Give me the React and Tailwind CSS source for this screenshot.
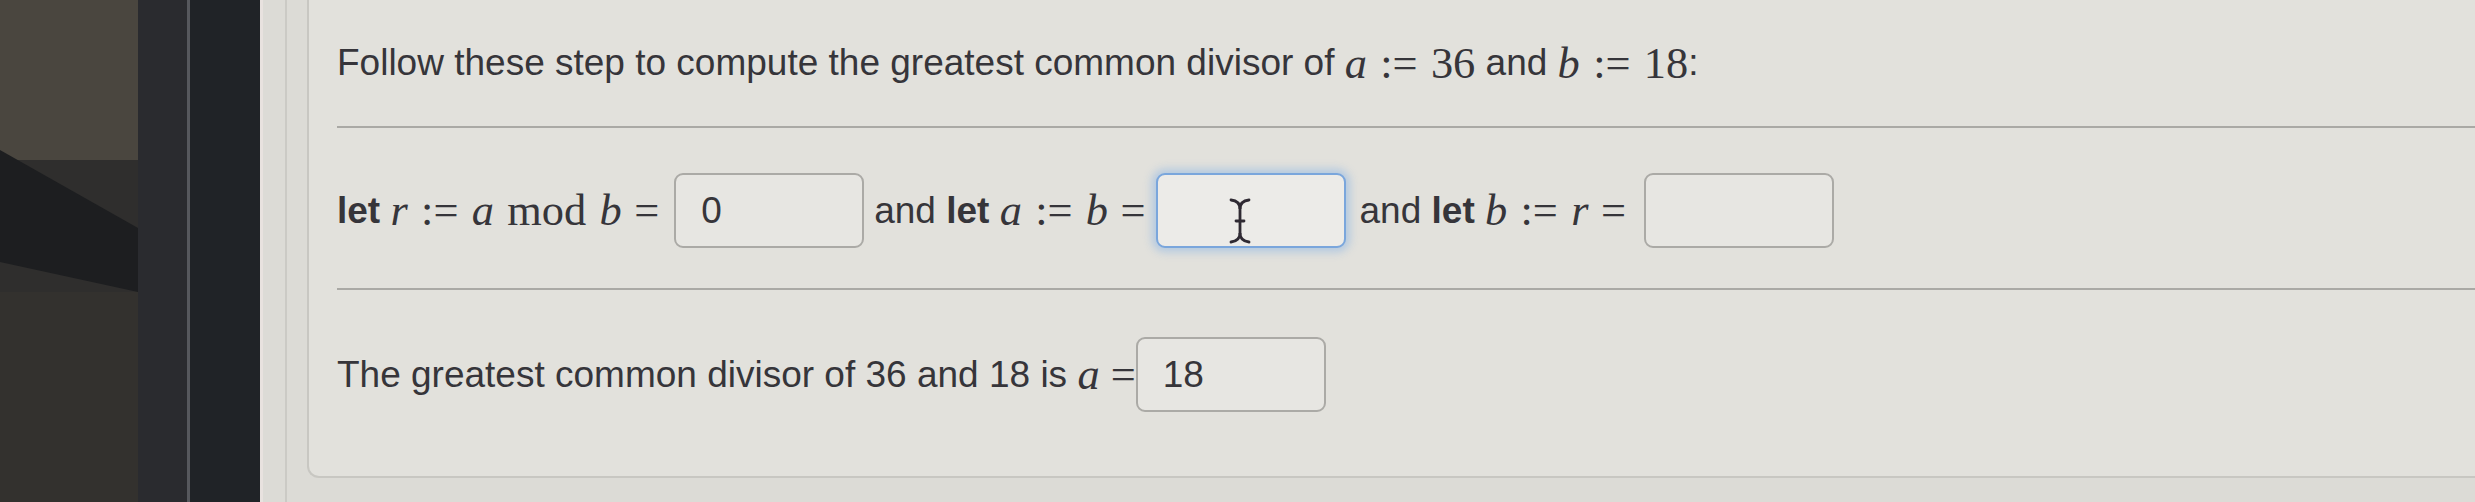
import React from 'react';

const M = ({ children }) => (
    <span className="font-['Liberation_Serif',serif] text-[1.2em] leading-none">{children}</span>
);
const V = ({ children }) => <span className="italic">{children}</span>;
const Rel = ({ children }) => <span className="mx-[0.3em]">{children}</span>;

const Box = ({ value, focused }) => (
    <div
        className={`relative w-[190px] h-[75px] rounded-[9px] border-2 flex items-center px-[25px] ${focused ? 'border-[#7aa6dc] bg-[#ecebe8] shadow-[0_0_8px_4px_rgba(120,170,230,0.45)]' : 'border-[#abaaa6] bg-[#e7e6e2]'}`}
    >
        <span>{value}</span>
        {focused && (
            <svg className="absolute left-[70px] top-[22px]" width="24" height="48" viewBox="0 0 24 48">
                <g fill="none" stroke="#2f2a33" strokeWidth="2.8" strokeLinecap="round">
                    <path d="M3 3 Q12 4 12 12 Q12 4 21 3" />
                    <path d="M12 11 L12 37" />
                    <path d="M8 24 L16 24" />
                    <path d="M3 45 Q12 44 12 36 Q12 44 21 45" />
                </g>
            </svg>
        )}
    </div>
);

const Divider = ({ className }) => <div className={`h-[2px] bg-[#aaa9a5] ${className}`} />;

const App = () => {
    return (
        <div className="flex w-[2475px] h-[502px] overflow-hidden bg-[#dcdbd6] font-['Liberation_Sans',Arial,sans-serif] text-[37px] text-[#36353a]">
            {/* dark bezel on the left */}
            <div className="flex w-[263px] h-full shrink-0">
                <svg width="187" height="502" viewBox="0 0 187 502" className="shrink-0">
                    <rect width="187" height="502" fill="#2f2e2d" />
                    <rect x="0" y="0" width="138" height="160" fill="#4a463f" />
                    <polygon points="0,150 138,228 138,292 0,262" fill="#1d1e20" />
                    <rect x="138" y="0" width="49" height="502" fill="#2a2b2f" />
                    <rect x="0" y="292" width="138" height="210" fill="#33312e" />
                </svg>
                <div className="w-[3px] h-full bg-[#56585d] shrink-0" />
                <div className="flex-1 h-full bg-[#202327]" />
                <div className="w-[3px] h-full bg-[#e8e2df]" />
            </div>

            {/* outer page strip */}
            <div className="flex w-[44px] h-full shrink-0">
                <div className="w-[22px]" />
                <div className="w-[2px] h-full bg-[#cbcac5]" />
            </div>

            {/* question card */}
            <div className="flex-1 h-[478px] bg-[#e2e1dc] border-l-2 border-b-2 border-[#c8c7c2] rounded-bl-[12px] pl-[28px] pt-[41px]">
                <div className="h-[44px] flex items-center whitespace-nowrap">
                    <span>Follow these step to compute the greatest common divisor of&nbsp;</span>
                    <M>
                        <V>a</V>
                        <Rel>:=</Rel>36
                    </M>
                    <span>&nbsp;and&nbsp;</span>
                    <M>
                        <V>b</V>
                        <Rel>:=</Rel>18
                    </M>
                    <span>:</span>
                </div>

                <Divider className="mt-[41px]" />

                <div className="mt-[45px] flex items-center whitespace-nowrap">
                    <span className="font-bold">let&nbsp;</span>
                    <M>
                        <V>r</V>
                        <Rel>:=</Rel>
                        <V>a</V>
                        <span className="mx-[0.3em]">mod</span>
                        <V>b</V>
                        <span className="ml-[0.28em] mr-[15px]">=</span>
                    </M>
                    <Box value="0" />
                    <span className="ml-[10px]">and&nbsp;</span>
                    <span className="font-bold">let&nbsp;</span>
                    <M>
                        <V>a</V>
                        <Rel>:=</Rel>
                        <V>b</V>
                        <span className="ml-[0.28em] mr-[10px]">=</span>
                    </M>
                    <Box value="" focused />
                    <span className="ml-[14px]">and&nbsp;</span>
                    <span className="font-bold">let&nbsp;</span>
                    <M>
                        <V>b</V>
                        <Rel>:=</Rel>
                        <V>r</V>
                        <span className="ml-[0.28em] mr-[18px]">=</span>
                    </M>
                    <Box value="" />
                </div>

                <Divider className="mt-[40px]" />

                <div className="mt-[47px] flex items-center whitespace-nowrap">
                    <span>The greatest common divisor of 36 and 18 is&nbsp;</span>
                    <M>
                        <V>a</V>
                        <span className="ml-[0.25em]">=</span>
                    </M>
                    <Box value="18" />
                </div>
            </div>
        </div>
    );
};

export default App;
